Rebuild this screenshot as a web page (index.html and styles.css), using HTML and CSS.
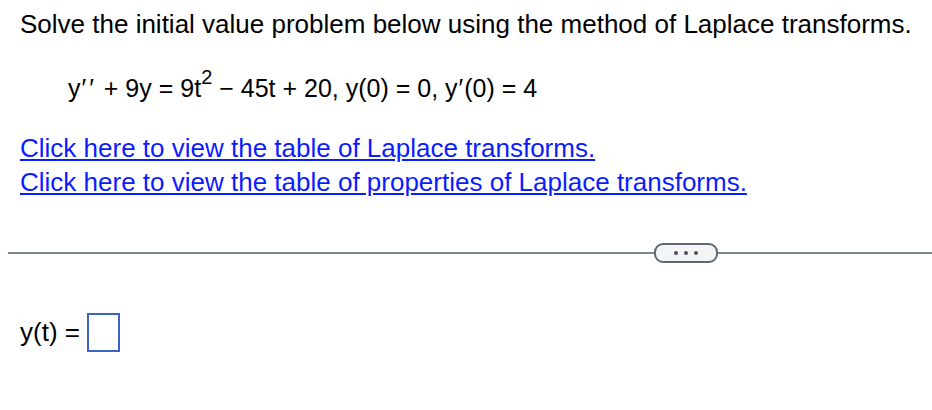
FILE: index.html
```html
<!DOCTYPE html>
<html>
<head>
<meta charset="utf-8">
<link rel="stylesheet" href="styles.css">
</head>
<body>
<div class="page">
  <p class="prompt">Solve the initial value problem below using the method of Laplace transforms.</p>
  <p class="equation">y<span class="pr">′′</span> + 9y = 9t<sup>2</sup> − 45t + 20, y(0) = 0, y<span class="pr1">′</span>(0) = 4</p>
  <div class="links">
    <a href="#">Click here to view the table of Laplace transforms.</a>
    <a href="#">Click here to view the table of properties of Laplace transforms.</a>
  </div>
</div>
<div class="divider">
  <span class="line short"></span>
  <span class="pill"><i></i><i></i><i></i></span>
  <span class="line long"></span>
</div>
<div class="answer">
  <span class="label">y(t) =</span>
  <span class="box"></span>
</div>
</body>
</html>
```
FILE: styles.css
```css
html, body { margin: 0; padding: 0; background: #fff; }
body { font-family: "Liberation Sans", Arial, sans-serif; color: #000; }
.page { padding: 9px 0 0 20px; }
.prompt { margin: 0; font-size: 26px; line-height: 30px; }
.equation { margin: 34px 0 0 48px; font-size: 25px; line-height: 30px; }
.equation .pr { letter-spacing: 3px; margin-left: 1px; }
.equation .pr1 { margin: 0 1px 0 1px; }
.equation sup { font-size: 20px; vertical-align: 13px; line-height: 0; }
.links { margin-top: 28px; display: flex; flex-direction: column; align-items: flex-start; }
.links a { color: #0b1cff; font-size: 26px; line-height: 34px; text-decoration: underline; }
.divider { margin: 44px 0 0 8px; display: flex; align-items: center; height: 20px; }
.line { height: 2px; background: #7e8791; }
.line.short { width: 646px; }
.line.long { flex: 1; }
.pill { width: 60px; height: 16px; border: 2px solid #5e6875; border-radius: 9px; background: #f3f4f6; display: flex; justify-content: center; align-items: center; gap: 6px; }
.pill i { width: 4px; height: 4px; border-radius: 50%; background: #4a525c; }
.answer { margin: 50px 0 0 20px; display: flex; align-items: center; gap: 7px; }
.label { font-size: 26px; }
.box { flex: none; border: 2px solid #3e63c6; box-sizing: border-box; display: inline-block; width: 33px; height: 39px; }
```
